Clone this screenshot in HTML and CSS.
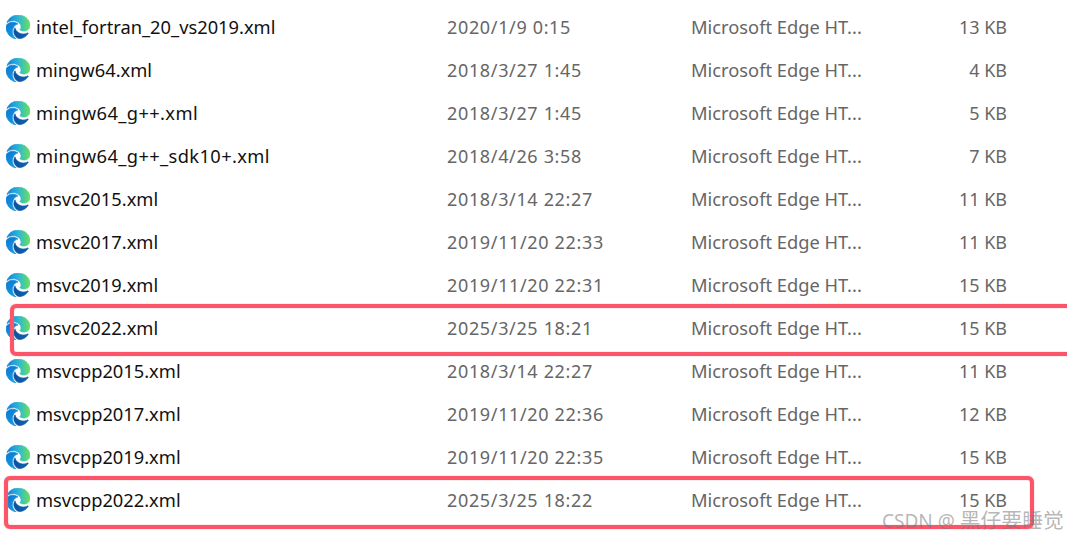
FILE: index.html
```html
<!DOCTYPE html>
<html lang="en">
<head>
<meta charset="utf-8">
<title>Files</title>
<link rel="stylesheet" href="styles.css">
</head>
<body>
<svg class="defs" width="0" height="0" aria-hidden="true">
  <defs>
    <linearGradient id="edgeTop" gradientUnits="userSpaceOnUse" x1="1" y1="9" x2="23" y2="9">
      <stop offset="0" stop-color="#0f80d6"/>
      <stop offset="0.5" stop-color="#2db4d8"/>
      <stop offset="1" stop-color="#62de66"/>
    </linearGradient>
    <linearGradient id="edgeLeft" gradientUnits="userSpaceOnUse" x1="2" y1="10" x2="10" y2="23">
      <stop offset="0" stop-color="#0d7ed6"/>
      <stop offset="1" stop-color="#1a9ae0"/>
    </linearGradient>
    <linearGradient id="edgeLow" gradientUnits="userSpaceOnUse" x1="6" y1="18" x2="22" y2="20">
      <stop offset="0" stop-color="#0c4f9a"/>
      <stop offset="1" stop-color="#0f62b4"/>
    </linearGradient>
    <symbol id="edge" viewBox="0 0 24 24">
      <path fill="url(#edgeLow)" stroke="url(#edgeLow)" stroke-width="0.7" d="M21.86 17.86q.14 0 .25.12.1.13.1.25t-.11.33l-.32.46-.43.53-.44.5q-.21.25-.38.42l-.22.23q-.58.53-1.34 1.04-.76.51-1.6.91-.86.4-1.74.64t-1.67.24q-.9 0-1.69-.28-.8-.28-1.48-.78-.68-.5-1.22-1.17-.53-.66-.92-1.44-.38-.77-.58-1.6-.2-.83-.2-1.67 0-1 .32-1.96.33-.97.87-1.8.14.95.55 1.77.41.82 1.02 1.5.6.68 1.38 1.21.78.54 1.64.9.86.36 1.77.56.92.2 1.8.2 1.12 0 2.18-.24 1.06-.23 2.06-.72l.2-.1.2-.05z"/>
      <path fill="url(#edgeLeft)" stroke="url(#edgeLeft)" stroke-width="0.7" d="M6.36 16.59q0 1.1.27 2.15.27 1.06.78 2.03.51.96 1.24 1.77.74.82 1.66 1.4-1.47-.2-2.8-.74-1.33-.55-2.48-1.37-1.15-.83-2.08-1.9-.92-1.07-1.58-2.33T.36 14.94Q0 13.54 0 12.06q0-.81.32-1.49.31-.68.83-1.23.53-.55 1.2-.96.66-.4 1.35-.66.74-.27 1.5-.39.78-.12 1.55-.12.7 0 1.42.1.72.12 1.4.35.68.23 1.32.57.63.35 1.16.83-.35 0-.7.07-.33.07-.65.23v-.02q-.63.28-1.2.74-.57.46-1.05 1.04-.48.58-.87 1.26-.38.67-.65 1.39-.27.71-.42 1.44-.15.72-.15 1.38z"/>
      <path fill="url(#edgeTop)" stroke="url(#edgeTop)" stroke-width="0.7" d="M11.96.06q1.7 0 3.33.39 1.63.38 3.07 1.15 1.43.77 2.62 1.93 1.18 1.16 1.98 2.7.49.94.76 1.96.28 1 .28 2.08 0 .89-.23 1.7-.24.8-.69 1.48-.45.68-1.1 1.22-.64.53-1.45.88-.54.24-1.11.36-.58.13-1.16.13-.42 0-.97-.03-.54-.03-1.1-.12-.55-.1-1.05-.28-.5-.19-.84-.5-.12-.09-.23-.24-.1-.16-.1-.33 0-.15.16-.35.16-.2.35-.5.2-.28.36-.68.16-.4.16-.95 0-1.06-.4-1.96-.4-.91-1.06-1.64-.66-.74-1.52-1.28-.86-.55-1.79-.89-.84-.3-1.72-.44-.87-.14-1.76-.14-1.55 0-3.06.45T.94 7.55q.71-1.74 1.81-3.13 1.1-1.38 2.52-2.35Q6.68 1.1 8.37.58q1.7-.52 3.58-.52Z"/>
    </symbol>
  </defs>
</svg>
<main class="list">
  <div class="row"><svg class="icon"><use href="#edge"/></svg><span class="name">intel_fortran_20_vs2019.xml</span><span class="date">2020/1/9 0:15</span><span class="type">Microsoft Edge HT...</span><span class="size">13 KB</span></div>
  <div class="row"><svg class="icon"><use href="#edge"/></svg><span class="name">mingw64.xml</span><span class="date">2018/3/27 1:45</span><span class="type">Microsoft Edge HT...</span><span class="size">4 KB</span></div>
  <div class="row"><svg class="icon"><use href="#edge"/></svg><span class="name name-wide">mingw64_g++.xml</span><span class="date">2018/3/27 1:45</span><span class="type">Microsoft Edge HT...</span><span class="size">5 KB</span></div>
  <div class="row"><svg class="icon"><use href="#edge"/></svg><span class="name name-wide">mingw64_g++_sdk10+.xml</span><span class="date">2018/4/26 3:58</span><span class="type">Microsoft Edge HT...</span><span class="size">7 KB</span></div>
  <div class="row"><svg class="icon"><use href="#edge"/></svg><span class="name">msvc2015.xml</span><span class="date">2018/3/14 22:27</span><span class="type">Microsoft Edge HT...</span><span class="size">11 KB</span></div>
  <div class="row"><svg class="icon"><use href="#edge"/></svg><span class="name">msvc2017.xml</span><span class="date">2019/11/20 22:33</span><span class="type">Microsoft Edge HT...</span><span class="size">11 KB</span></div>
  <div class="row"><svg class="icon"><use href="#edge"/></svg><span class="name">msvc2019.xml</span><span class="date">2019/11/20 22:31</span><span class="type">Microsoft Edge HT...</span><span class="size">15 KB</span></div>
  <div class="row"><svg class="icon"><use href="#edge"/></svg><span class="name">msvc2022.xml</span><span class="date">2025/3/25 18:21</span><span class="type">Microsoft Edge HT...</span><span class="size">15 KB</span></div>
  <div class="row"><svg class="icon"><use href="#edge"/></svg><span class="name">msvcpp2015.xml</span><span class="date">2018/3/14 22:27</span><span class="type">Microsoft Edge HT...</span><span class="size">11 KB</span></div>
  <div class="row"><svg class="icon"><use href="#edge"/></svg><span class="name">msvcpp2017.xml</span><span class="date">2019/11/20 22:36</span><span class="type">Microsoft Edge HT...</span><span class="size">12 KB</span></div>
  <div class="row"><svg class="icon"><use href="#edge"/></svg><span class="name">msvcpp2019.xml</span><span class="date">2019/11/20 22:35</span><span class="type">Microsoft Edge HT...</span><span class="size">15 KB</span></div>
  <div class="row"><svg class="icon"><use href="#edge"/></svg><span class="name">msvcpp2022.xml</span><span class="date">2025/3/25 18:22</span><span class="type">Microsoft Edge HT...</span><span class="size">15 KB</span></div>
</main>
<div class="mark mark-one"></div>
<div class="mark mark-two"></div>
<div class="watermark">CSDN @<span class="watermark-cjk">黑仔要睡觉</span></div>
</body>
</html>
```
FILE: styles.css
```css
html, body {
  margin: 0;
  padding: 0;
  background: #fff;
  width: 1067px;
  height: 538px;
  overflow: hidden;
}
body {
  position: relative;
  font-family: "Noto Sans", "Noto Sans CJK SC", sans-serif;
}
.defs {
  position: absolute;
}
.list {
  padding-top: 6px;
  display: flex;
  flex-direction: column;
}
.row {
  height: 43px;
  display: grid;
  grid-template-columns: 24px 417px 244px 210px 106px;
  align-items: center;
  padding-left: 6px;
  font-size: 18px;
}
.icon {
  width: 24px;
  height: 24px;
  display: block;
  overflow: visible;
  margin-bottom: 1px;
}
.name, .date, .type, .size {
  padding-bottom: 2px;
}
.name {
  padding-left: 6px;
  color: #111;
  font-size: 18.3px;
}
.name-wide {
  letter-spacing: 0.38px;
}
.date, .type, .size {
  color: #666;
}
.date {
  letter-spacing: 0.65px;
}
.type {
  font-size: 18.3px;
}
.size {
  text-align: right;
}
.mark {
  position: absolute;
  box-sizing: border-box;
  border: 4px solid #fc5468;
  border-radius: 6px;
  box-shadow: 0 0 1px #fc5468, inset 0 0 1px #fc5468;
}
.mark-one {
  left: 10px;
  top: 304px;
  width: 1070px;
  height: 52px;
}
.mark-two {
  left: 4px;
  top: 476px;
  width: 1030px;
  height: 53px;
}
.watermark {
  position: absolute;
  left: 882px;
  top: 508px;
  font-size: 19px;
  line-height: 24px;
  color: rgba(120, 120, 120, 0.55);
  white-space: nowrap;
}
.watermark-cjk {
  font-size: 20.8px;
  margin-left: 5px;
}
```
